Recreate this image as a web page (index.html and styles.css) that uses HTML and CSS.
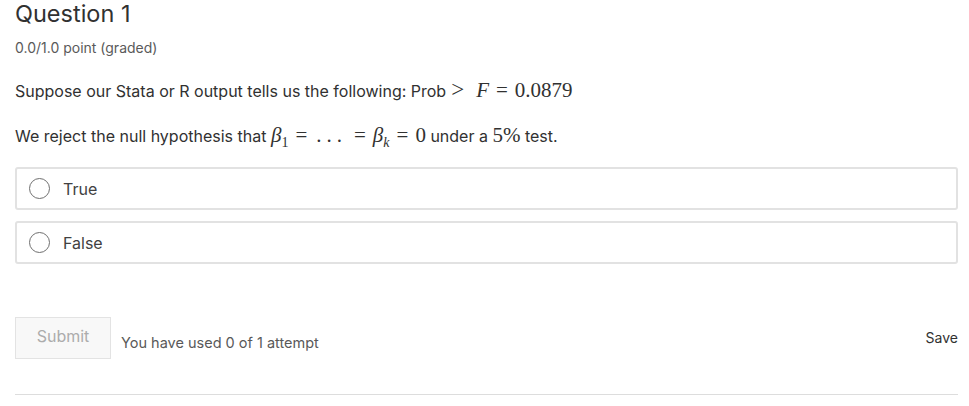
FILE: index.html
```html
<!DOCTYPE html>
<html lang="en">
<head>
  <meta charset="UTF-8">
  <title>Question 1</title>
  <link rel="stylesheet" href="styles.css">
</head>
<body>
  <div class="problem">
    <h3 class="problem-title">Question 1</h3>
    <div class="problem-progress">0.0/1.0 point (graded)</div>

    <p class="prompt">Suppose our Stata or R output tells us the following: Prob<span class="math"><span class="op gt">&gt;</span><i>F</i><span class="op">=</span>0.0879</span></p>
    <p class="prompt">We reject the null hypothesis that <span class="math"><i>β</i><sub>1</sub><span class="op">=</span><span class="dots">...</span><span class="op">=</span><i>β</i><sub><i>k</i></sub><span class="op">=</span>0</span> under a <span class="math">5%</span> test.</p>

    <div class="choices">
      <label class="choice"><span class="radio"></span>True</label>
      <label class="choice"><span class="radio"></span>False</label>
    </div>

    <div class="action">
      <button class="submit" disabled>Submit</button>
      <span class="attempts">You have used 0 of 1 attempt</span>
      <span class="save">Save</span>
    </div>

    <hr class="divider">
  </div>
</body>
</html>
```

FILE: styles.css
```css
body {
  margin: 0;
  font-family: 'Inter', sans-serif;
  color: #313131;
  background: #fff;
}

.problem {
  padding: 0 11px 0 15px;
}

.problem-title {
  font-size: 23.5px;
  font-weight: 400;
  margin: 0;
  padding-top: 1px;
  line-height: 26px;
  color: #313131;
}

.problem-progress {
  font-size: 14px;
  color: #5a5a5a;
  margin-top: 13px;
  line-height: 16px;
}

.prompt {
  font-size: 16px;
  line-height: 20px;
  margin: 24px 0 0;
  color: #313131;
}

.prompt + .prompt {
  margin-top: 24px;
}

.math {
  font-family: 'Liberation Serif', 'DejaVu Serif', serif;
  font-size: 21px;
}

.math i {
  font-style: italic;
}

.math sub {
  font-size: 14px;
  line-height: 0;
}

.math .op {
  margin: 0 7px;
}

.math .gt {
  margin: 0 12px 0 5px;
  font-size: 23px;
}

.dots {
  letter-spacing: 5px;
  margin-left: 2px;
}

.choices {
  margin-top: 21px;
}

.choice {
  box-sizing: border-box;
  display: flex;
  align-items: center;
  height: 43px;
  border: 2px solid #e2e2e2;
  border-radius: 3px;
  padding-left: 12px;
  margin-bottom: 11px;
  font-size: 16px;
  color: #414141;
}

.radio {
  width: 19px;
  height: 19px;
  border: 1.5px solid #6f6f6f;
  border-radius: 50%;
  margin-right: 13px;
}

.action {
  display: flex;
  align-items: center;
  margin-top: 53px;
}

.submit {
  width: 96px;
  height: 42px;
  background: #f8f8f8;
  border: 1px solid #e3e3e3;
  color: #acacac;
  font-family: 'Inter', sans-serif;
  font-size: 16px;
  padding: 0 0 4px;
}

.attempts {
  font-size: 14.5px;
  color: #595959;
  margin-left: 10px;
  margin-top: 8px;
}

.save {
  margin-left: auto;
  font-size: 14px;
  color: #313131;
  margin-bottom: 2px;
}

.divider {
  border: 0;
  border-top: 1px solid #dddddd;
  margin: 35px 0 0;
}
```
